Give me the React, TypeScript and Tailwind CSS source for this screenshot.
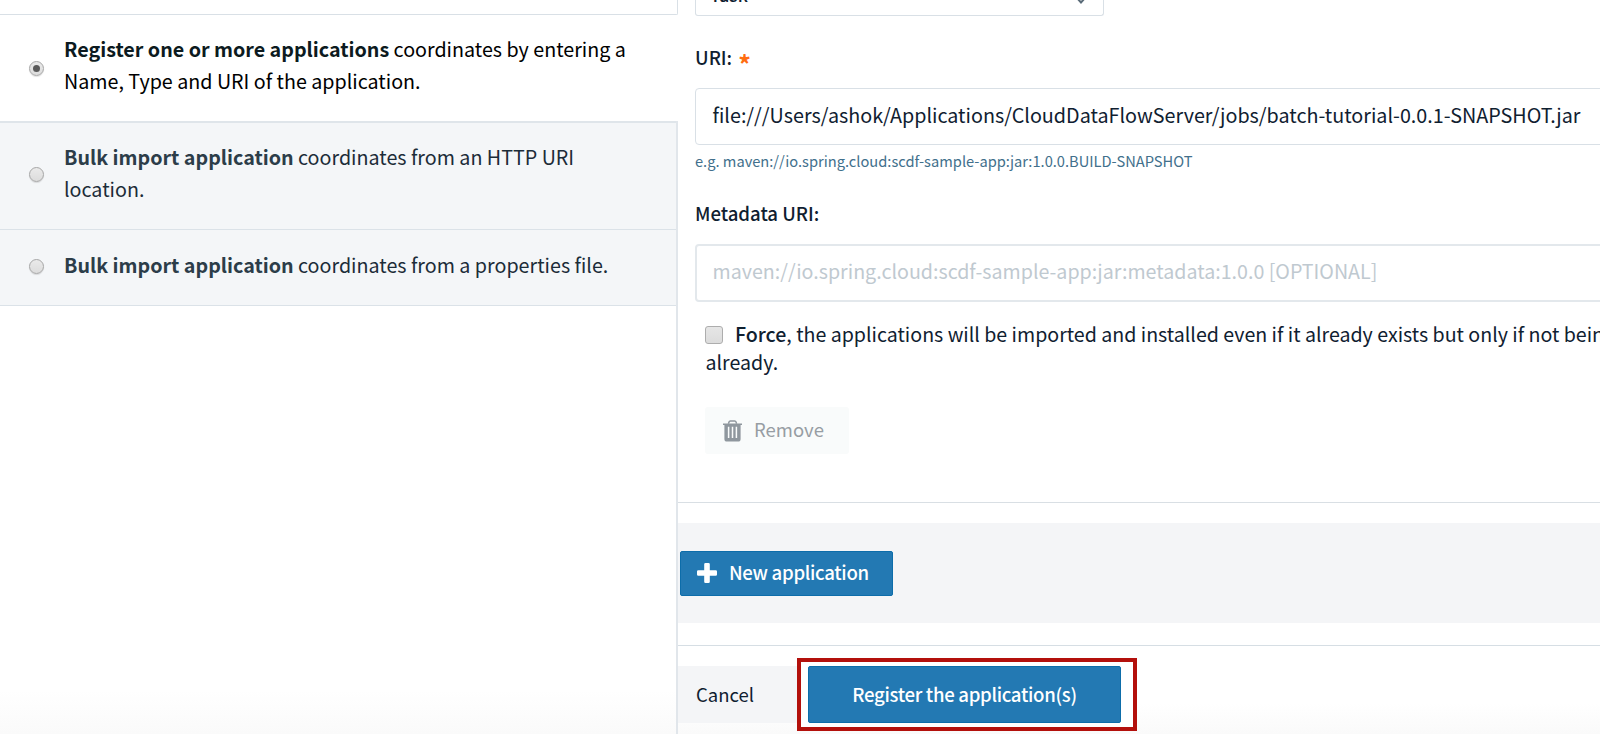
import React from "react";

const TrashIcon = () => (
  <svg className="block h-[22px] w-[19px] shrink-0" viewBox="0 0 19 22">
    <path d="M5.4 3.8L6 1.9Q6.300 .9 7.300 .9H11.700Q12.700 .9 13 1.900L13.600 3.800" fill="none" stroke="#8f979e" strokeWidth="1.5" />
    <path d="M0 3.6H19V5H17.6V19Q17.6 21.6 15 21.6H4Q1.400 21.600 1.400 19V5H0Z" fill="#8f979e" />
    <path d="M5.6 6.8V18M9.5 6.8V18M13.4 6.8V18" stroke="#f9fbfb" strokeWidth="1.5" />
  </svg>
);

const PlusIcon = () => (
  <svg className="block h-5 w-5 shrink-0" viewBox="0 0 20 20">
    <path d="M8.5 0h3a1.3 1.3 0 0 1 1.3 1.3V7.2h5.9A1.3 1.3 0 0 1 20 8.500v3a1.3 1.3 0 0 1-1.300 1.300H12.800v5.900A1.300 1.300 0 0 1 11.500 20h-3a1.300 1.300 0 0 1-1.300-1.300V12.800H1.300A1.300 1.300 0 0 1 0 11.500v-3a1.300 1.300 0 0 1 1.300-1.300H7.200V1.300A1.300 1.300 0 0 1 8.500 0Z" fill="#fff" />
  </svg>
);

const Radio = ({ checked = false }: { checked?: boolean }) => (
  <span className="flex size-[15px] shrink-0 items-center justify-center rounded-full border border-[#a6a6a6] bg-linear-to-b from-[#eaeaea] to-[#dcdcdc] shadow-[0_1px_1px_rgba(0,0,0,0.12)]">
    {checked && <span className="size-[7px] rounded-full bg-[#5a5a5a]" />}
  </span>
);

export default function App() {
  return (
    <div className="flex h-[734px] w-[1600px] overflow-hidden bg-white font-['Noto_Sans_CJK_SC',sans-serif] text-[19.7px] whitespace-nowrap text-[#0f2030]">
      <aside className="flex w-[678px] shrink-0 flex-col">
        <div className="h-[15px] shrink-0 rounded-br-[2px] border-r border-b border-[#d9e0e6]" />
        <div className="flex h-[106px] shrink-0 items-center pl-[29px] text-black">
          <Radio checked />
          <p className="mt-[-6px] ml-[20px] leading-8">
            <b className="text-[#0c1a20]">Register one or more applications</b> coordinates by entering a<br />
            Name, Type and URI of the application.
          </p>
        </div>
        <div className="flex grow flex-col border-r-2 border-[#e1e6eb]">
          <div className="flex h-[108px] shrink-0 items-center border-t-2 border-[#dfe5ea] bg-[#f4f6f8] pl-[29px] text-[#1c2c38]">
            <span className="mb-[3px]"><Radio /></span>
            <p className="mt-[-6px] ml-[20px] leading-8">
              <b className="text-[#2c3d49]">Bulk import application</b> coordinates from an HTTP URI<br />
              location.
            </p>
          </div>
          <div className="flex h-[77px] shrink-0 items-center border-y border-[#dbe2e8] bg-[#f4f6f8] pl-[29px] text-[#1c2c38]">
            <span className="mb-[2px]"><Radio /></span>
            <p className="mt-[-6px] ml-[20px] leading-8">
              <b className="text-[#2c3d49]">Bulk import application</b> coordinates from a properties file.
            </p>
          </div>
          <div className="mt-auto h-[44px] bg-linear-to-b from-white to-[#fafafa]" />
        </div>
      </aside>

      <main className="flex w-[922px] shrink-0 flex-col overflow-hidden">
        <div className="flex h-[502px] shrink-0 flex-col pl-[17px]">
          <div className="flex h-4 w-[409px] shrink-0 items-end justify-between overflow-hidden rounded-b-[3px] border border-t-0 border-[#d9e0e6] pr-[17px] pl-[14px]">
            <span className="mb-[8px] text-[17.5px] leading-[24px] font-medium">Task</span>
            <svg className="mb-[11px] block h-[7px] w-[10px]" viewBox="0 0 10 7">
              <path d="M1 1L5 5.500L9 1" fill="none" stroke="#5a6b78" strokeWidth="2" />
            </svg>
          </div>
          <div className="mt-[28px] flex h-[28px] shrink-0 text-[18.6px] leading-[26px] font-medium">
            URI:<span className="mt-[6px] ml-[6px] text-[25px] font-bold text-[#ff6d10]">*</span>
          </div>
          <div className="mt-4 flex h-[57px] w-[920px] shrink-0 items-center rounded-[4px] border border-[#d9e0e6] pl-[16.500px] text-[19.74px]">
            <span className="mb-[3px]">file:///Users/ashok/Applications/CloudDataFlowServer/jobs/batch-tutorial-0.0.1-SNAPSHOT.jar</span>
          </div>
          <div className="mt-[4px] h-[24px] shrink-0 text-[14.67px] leading-6 text-[#42708c]">e.g. maven://io.spring.cloud:scdf-sample-app:jar:1.0.0.BUILD-SNAPSHOT</div>
          <div className="mt-[27px] h-[27px] shrink-0 text-[18.6px] leading-[26px] font-medium">Metadata URI:</div>
          <div className="mt-[17px] flex h-[58px] w-[920px] shrink-0 items-center rounded-[4px] border-2 border-[#e3e8ec] pl-[15.500px] text-[19.65px] text-[#bfc9d0]">
            <span className="mb-[5px]">maven://io.spring.cloud:scdf-sample-app:jar:metadata:1.0.0 [OPTIONAL]</span>
          </div>
          <div className="mt-[18px] ml-[10px] shrink-0 text-[19.600px] leading-[28px]">
            <div className="flex items-center">
              <span className="mt-[2px] mr-[12px] size-[18px] shrink-0 rounded-[3px] border border-[#adadad] bg-linear-to-b from-[#e6e6e6] to-[#dcdcdc]" />
              <span><span className="font-medium">Force</span>, the applications will be imported and installed even if it already exists but only if not being</span>
            </div>
            <div className="pl-[0.500px]">already.</div>
          </div>
          <button className="mt-[31px] ml-[10px] flex h-[47px] w-[144px] shrink-0 items-center rounded-[3px] bg-[#f9fbfb] pl-[18px] text-[18.5px] text-[#979da3]">
            <TrashIcon />
            <span className="mb-[2px] ml-[12px]">Remove</span>
          </button>
        </div>
        <div className="h-[21px] shrink-0 border-t border-[#d9dfe4]" />
        <div className="flex h-[100px] shrink-0 items-center bg-[#f4f5f7] pl-[2px]">
          <button className="flex h-[45px] w-[213px] items-center rounded-[2px] border border-[#0d6daa] bg-[#2379b3] pl-[16px] text-[18.600px] font-medium tracking-[-0.3px] text-white">
            <PlusIcon />
            <span className="mb-[2px] ml-[12px]">New application</span>
          </button>
        </div>
        <div className="mt-[22px] h-[13px] shrink-0 border-t border-[#d6dee4]" />
        <div className="flex h-[76px] shrink-0 bg-linear-to-b from-white from-60% to-[#fafafa]">
          <button className="mt-[8px] flex h-[57px] w-[119px] items-center bg-[#f4f5f7] pl-[18px] text-[18.5px]">
            <span>Cancel</span>
          </button>
          <div className="h-[73px] w-[340px] border-4 border-[#b3100c] bg-white py-1 pl-[7px]">
            <button className="flex h-[57px] w-[313px] items-center justify-center rounded-[2px] border border-[#0d6daa] bg-[#2379b3] text-[18.600px] font-medium tracking-[-0.3px] text-white">
              <span className="mb-[2px]">Register the application(s)</span>
            </button>
          </div>
        </div>
      </main>
    </div>
  );
}
